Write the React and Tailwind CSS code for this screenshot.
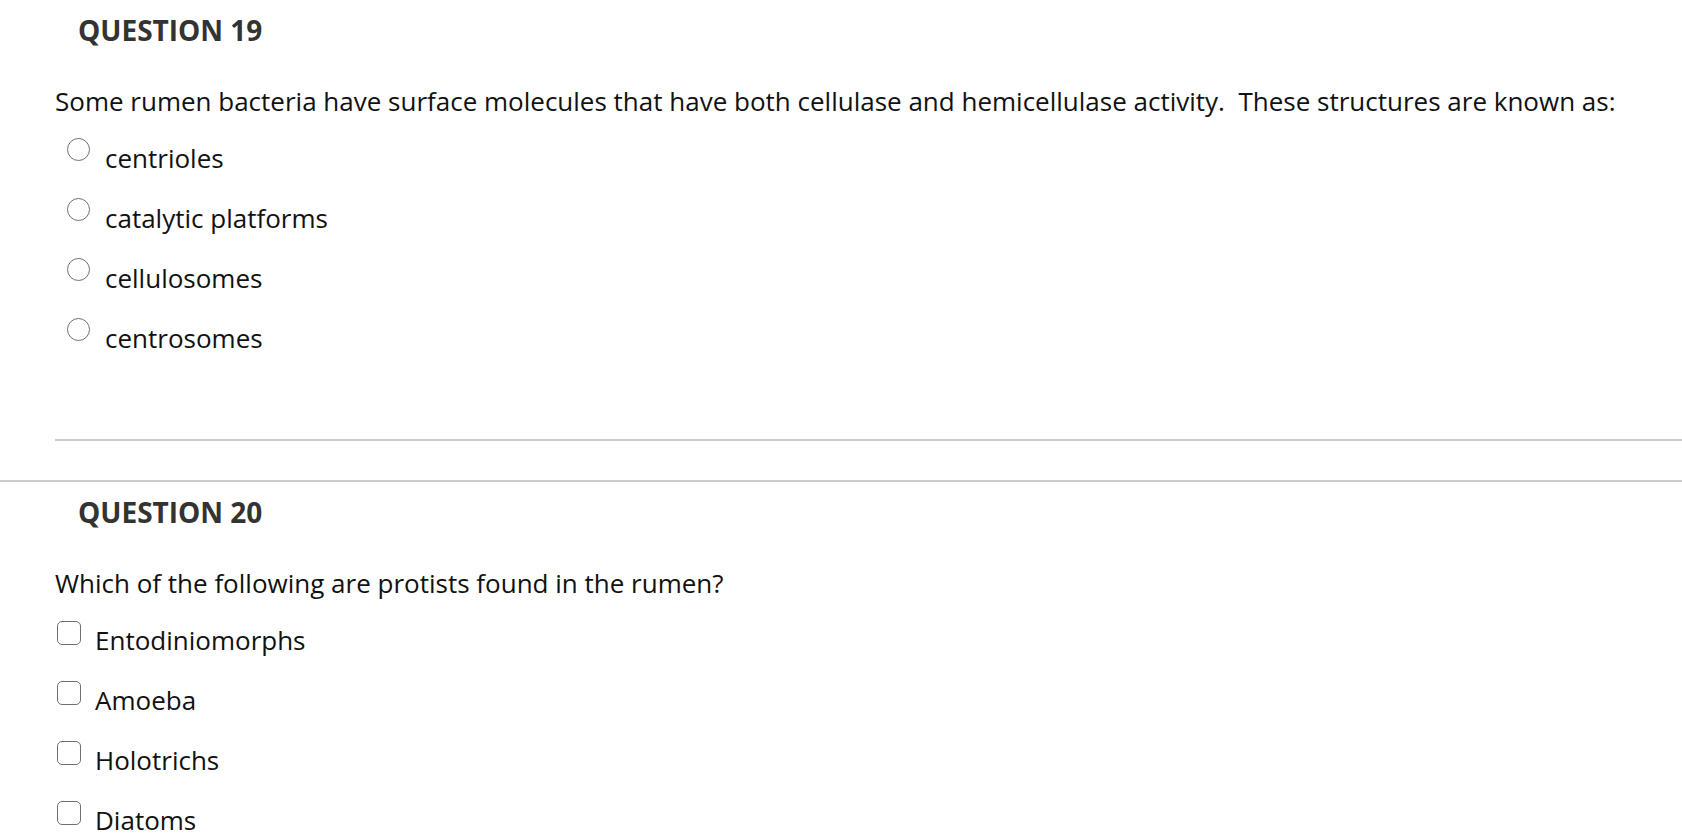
import React from "react";

const q19 = ["centrioles", "catalytic platforms", "cellulosomes", "centrosomes"];
const q20 = ["Entodiniomorphs", "Amoeba", "Holotrichs", "Diatoms"];

function Radio() {
  return (
    <span className="block w-[23px] h-[23px] shrink-0 rounded-full border-[1.5px] border-[#6f6f6f] bg-white" />
  );
}

function Checkbox() {
  return (
    <span className="block w-[24px] h-[24px] shrink-0 rounded-[5px] border-[1.5px] border-[#6f6f6f] bg-white" />
  );
}

export default function App() {
  return (
    <div className="w-[1682px] h-[840px] overflow-hidden bg-white font-['Open_Sans',sans-serif] text-[#111]">
      <div className="pl-[55px]">
        <h2 className="pt-[13px] ml-[23px] text-[28px] leading-[34px] font-bold text-[#333]">
          QUESTION 19
        </h2>
        <p className="mt-[36px] text-[26px] leading-[36px]">
          Some rumen bacteria have surface molecules that have both cellulase and hemicellulase activity.&nbsp; These structures are known as:
        </p>
        <div className="mt-[19px] flex flex-col">
          {q19.map((o) => (
            <label key={o} className="flex items-start h-[60px]">
              <span className="ml-[12px]">
                <Radio />
              </span>
              <span className="ml-[15px] mt-[2px] text-[26px] leading-[36px]">{o}</span>
            </label>
          ))}
        </div>
        <div className="mt-[61px] h-[2px] bg-[#cccccc]" />
      </div>
      <div className="mt-[39px] h-[2px] bg-[#cccccc]" />
      <div className="pl-[55px]">
        <h2 className="mt-[13px] ml-[23px] text-[28px] leading-[34px] font-bold text-[#333]">
          QUESTION 20
        </h2>
        <p className="mt-[36px] text-[26px] leading-[36px]">
          Which of the following are protists found in the rumen?
        </p>
        <div className="mt-[20px] flex flex-col">
          {q20.map((o) => (
            <label key={o} className="flex items-start h-[60px]">
              <span className="ml-[2px]">
                <Checkbox />
              </span>
              <span className="ml-[14px] mt-[1px] text-[26px] leading-[36px]">{o}</span>
            </label>
          ))}
        </div>
      </div>
    </div>
  );
}
